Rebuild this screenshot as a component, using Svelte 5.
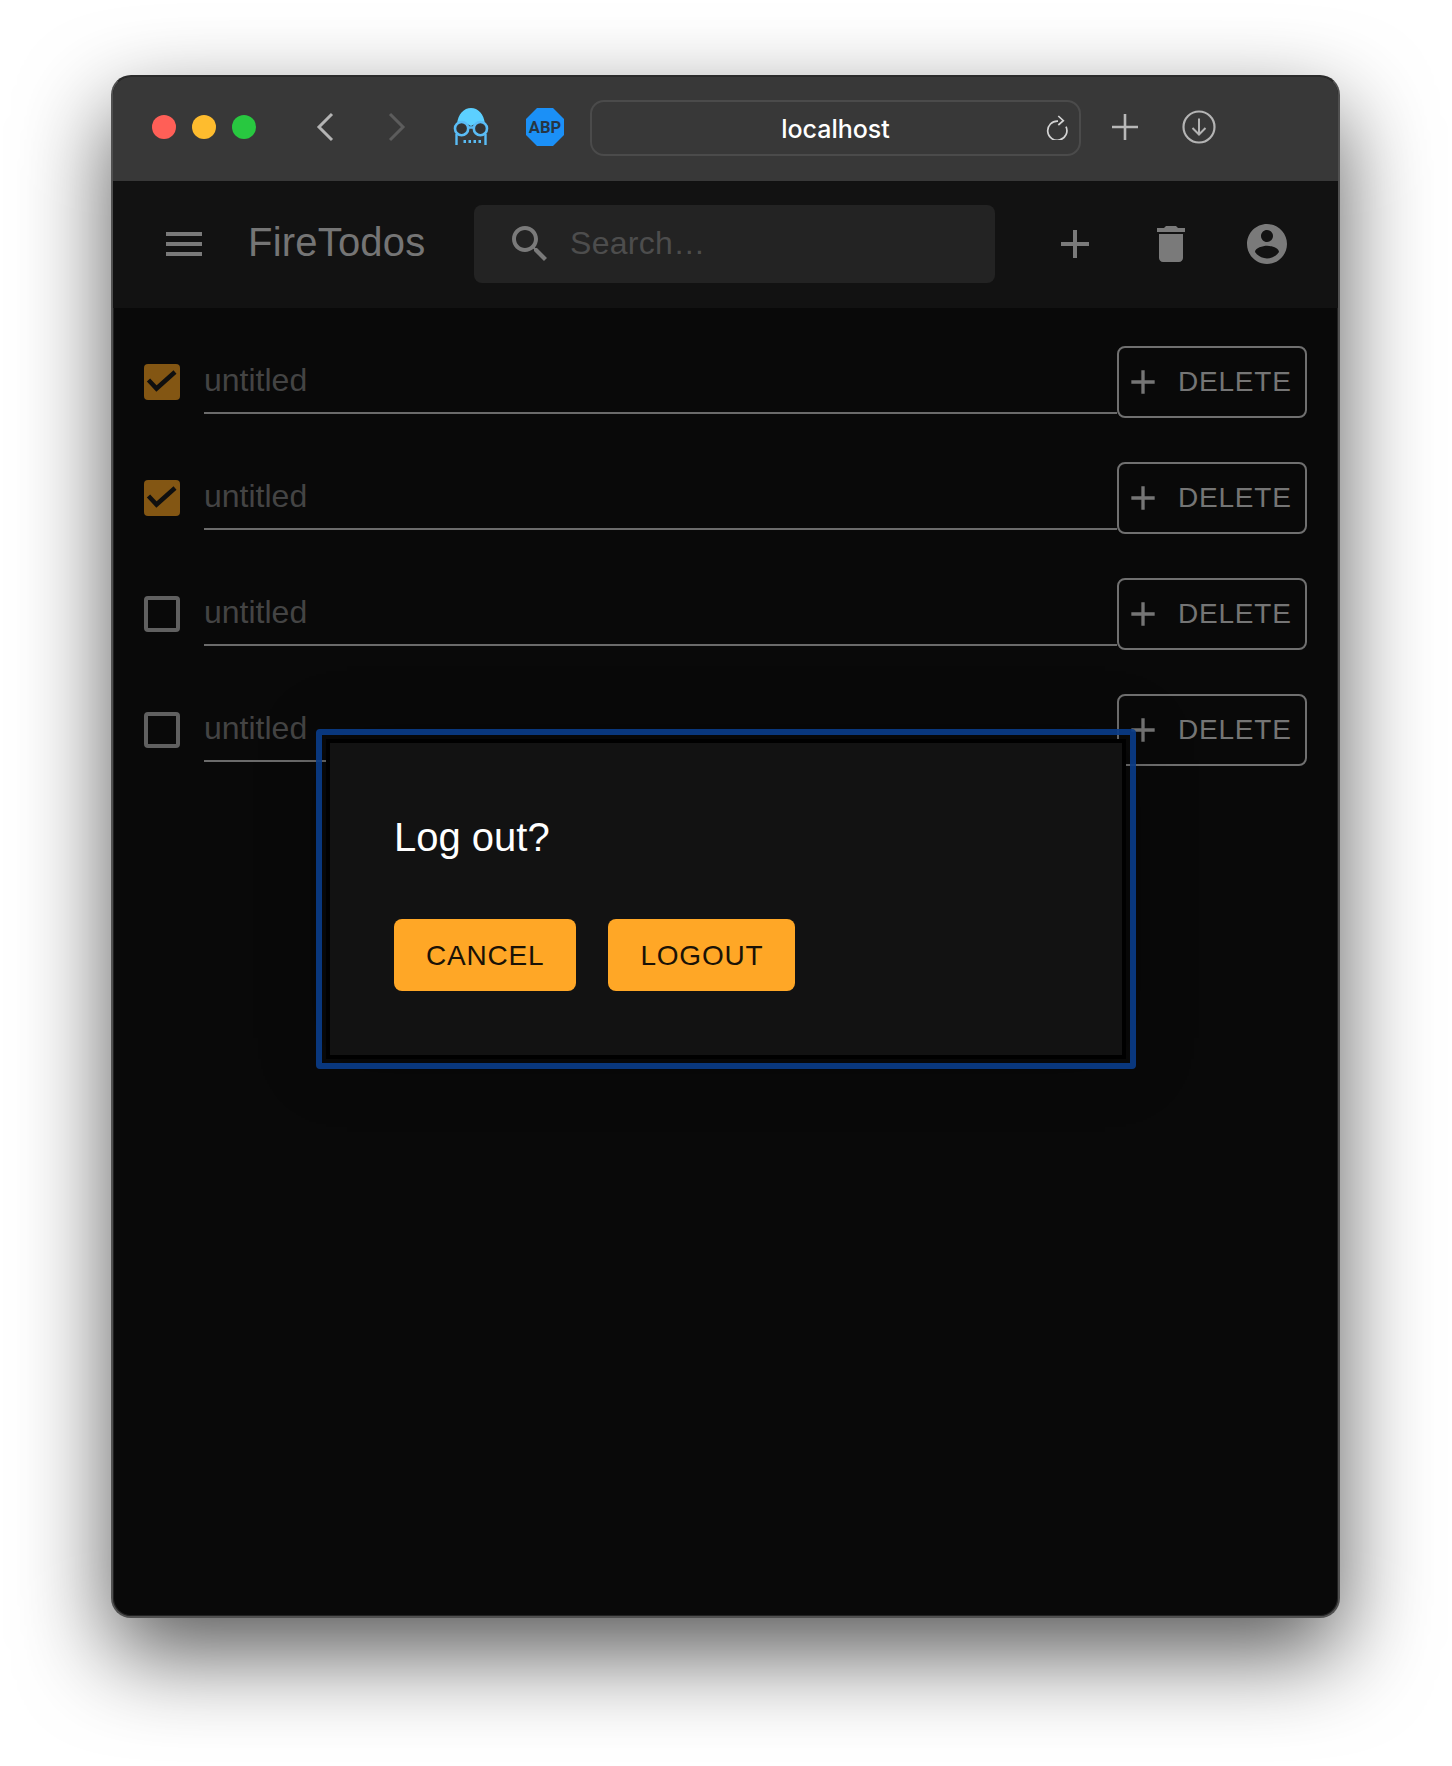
<script>
	const todos = [
		{ id: 1, done: true },
		{ id: 2, done: true },
		{ id: 3, done: false },
		{ id: 4, done: false }
	];
</script>

<div class="page">
	<div class="window">
		<div class="toolbar">
			<div class="lights">
				<span class="light red"></span>
				<span class="light yellow"></span>
				<span class="light green"></span>
			</div>
			<svg class="chevron" viewBox="0 0 20 32"><path d="M17 3 4 16l13 13" stroke="#b4b4b4" /></svg>
			<svg class="chevron next" viewBox="0 0 20 32"><path d="M3 3l13 13L3 29" stroke="#5c5c5c" /></svg>
			<svg class="ghost" viewBox="0 0 36 38">
				<path d="M4 16C5 6 11 0 18 0s13 6 14 16c-3-2-6-2-8-1l-6 3-6-3c-2-1-5-1-8 1z" fill="#5cd0ff" />
				<circle cx="8.6" cy="20.6" r="6.6" fill="#333" stroke="#5abcf5" stroke-width="2.6" />
				<circle cx="27.4" cy="20.6" r="6.6" fill="#333" stroke="#5abcf5" stroke-width="2.6" />
				<path d="M15 19.5h6M3.5 26v11M32.5 26v11" fill="none" stroke="#5abcf5" stroke-width="2.4" />
				<path d="M10.5 33.5h2.5M15.5 33.5h2.500M20.500 33.500h2.500M25.500 33.500h2.500" fill="none" stroke="#5abcf5" stroke-width="2.800" />
			</svg>
			<svg class="abp" viewBox="0 0 38 38">
				<path d="M11 0h16l11 11v16L27 38H11L0 27V11z" fill="#1b90f7" />
				<text x="19" y="25" text-anchor="middle">ABP</text>
			</svg>
			<div class="url">
				<span>localhost</span>
				<svg class="reload" viewBox="0 0 24 28">
					<path d="M13 9.100A9.600 9.600 0 1 0 21 14.600" fill="none" stroke="#d4d4d4" stroke-width="1.700" />
					<path d="M13.300 4l5 4.700-5 4.300" fill="none" stroke="#d4d4d4" stroke-width="1.700" />
				</svg>
			</div>
			<svg class="newtab" viewBox="0 0 28 28"><path d="M14 1v26M1 14h26" stroke="#b8b8b8" stroke-width="2.600" /></svg>
			<svg class="download" viewBox="0 0 34 34">
				<circle cx="17" cy="17" r="15.500" fill="none" stroke="#b4b4b4" stroke-width="2.200" />
				<path d="M17 8.500v16M10.500 18l6.500 6.500 6.500-6.500" fill="none" stroke="#b4b4b4" stroke-width="2" />
			</svg>
		</div>

		<header class="appbar">
			<svg class="icon" viewBox="0 0 24 24"><path d="M3 18h18v-2H3v2zm0-5h18v-2H3v2zm0-7v2h18V6H3z" /></svg>
			<div class="title">FireTodos</div>
			<div class="search">
				<svg class="icon" viewBox="0 0 24 24"><path d="M15.500 14h-.79l-.28-.27C15.410 12.590 16 11.110 16 9.500 16 5.910 13.090 3 9.500 3S3 5.910 3 9.500 5.910 16 9.500 16c1.610 0 3.090-.59 4.230-1.570l.27.28v.79l5 4.990L20.490 19l-4.990-5zm-6 0C7.010 14 5 11.990 5 9.500S7.010 5 9.500 5 14 7.010 14 9.500 11.990 14 9.500 14z" /></svg>
				<span>Search…</span>
			</div>
			<div class="actions">
				<svg class="icon" viewBox="0 0 24 24"><path d="M19 13h-6v6h-2v-6H5v-2h6V5h2v6h6v2z" /></svg>
				<svg class="icon" viewBox="0 0 24 24"><path d="M6 19c0 1.100.9 2 2 2h8c1.100 0 2-.9 2-2V7H6v12zM19 4h-3.500l-1-1h-5l-1 1H5v2h14V4z" /></svg>
				<svg class="icon" viewBox="0 0 24 24"><path d="M12 2C6.480 2 2 6.480 2 12s4.480 10 10 10 10-4.480 10-10S17.520 2 12 2zm0 3c1.660 0 3 1.340 3 3s-1.340 3-3 3-3-1.340-3-3 1.340-3 3-3zm0 14.200c-2.500 0-4.710-1.280-6-3.220.03-1.990 4-3.080 6-3.080 1.990 0 5.970 1.090 6 3.080-1.290 1.940-3.500 3.220-6 3.220z" /></svg>
			</div>
		</header>

		<main class="content">
			<ul class="todos">
				{#each todos as todo (todo.id)}
					<li>
						<span class="check" class:done={todo.done}>
							{#if todo.done}
								<svg viewBox="0 0 36 36"><path d="M4.500 16 12.500 24.500 31 8" /></svg>
							{/if}
						</span>
						<div class="text">untitled</div>
						<button type="button" class="del">
							<svg viewBox="0 0 24 24"><path d="M19 13h-6v6h-2v-6H5v-2h6V5h2v6h6v2z" /></svg>
							DELETE
						</button>
					</li>
				{/each}
			</ul>

			<div class="dialog">
				<h2>Log out?</h2>
				<div class="buttons">
					<button type="button">CANCEL</button>
					<button type="button">LOGOUT</button>
				</div>
			</div>
		</main>
	</div>
</div>

<style>
	:global(body) {
		background: #fff;
		font-family: "Liberation Sans", Arial, sans-serif;
	}
	.page {
		height: 1766px;
		box-sizing: border-box;
		padding: 75px 112px 148px 111px;
		overflow: hidden;
	}
	.window {
		height: 100%;
		display: flex;
		flex-direction: column;
		background: #090909;
		border-radius: 20px;
		overflow: hidden;
		box-shadow: 0 0 0 1px #222 inset, 0 36px 90px rgba(0, 0, 0, 0.65);
		border: 2px solid #505050;
		border-top-color: #2b2b2b;
		box-sizing: border-box;
	}
	.toolbar {
		height: 105px;
		flex: none;
		background: #383838;
		border-bottom: 1px solid #111;
		box-sizing: border-box;
		display: flex;
		align-items: center;
		padding: 0 0 4px 39px;
	}
	.lights {
		display: flex;
		gap: 16px;
	}
	.light {
		width: 24px;
		height: 24px;
		border-radius: 50%;
	}
	.red { background: #ff5f57; }
	.yellow { background: #febc2e; }
	.green { background: #28c840; }
	.chevron {
		width: 20px;
		height: 32px;
		margin-left: 59px;
	}
	.chevron.next {
		margin-left: 52px;
	}
	.chevron path {
		fill: none;
		stroke-width: 3;
	}
	.ghost {
		width: 36px;
		height: 38px;
		margin-left: 46px;
	}
	.abp {
		width: 38px;
		height: 38px;
		margin-left: 37px;
	}
	.abp text {
		font: 700 16.500px Roboto, sans-serif;
		fill: #263645;
	}
	.url {
		width: 491px;
		height: 56px;
		margin: 1px 0 0 26px;
		padding-top: 3px;
		box-sizing: border-box;
		border: 2px solid #4b4b4b;
		border-radius: 14px;
		position: relative;
		display: flex;
		align-items: center;
		justify-content: center;
		color: #fff;
		font: 500 25px Inter, sans-serif;
	}
	.reload {
		position: absolute;
		right: 10px;
		top: 10px;
		width: 24px;
		height: 28px;
	}
	.newtab {
		width: 28px;
		height: 28px;
		margin-left: 30px;
	}
	.download {
		width: 34px;
		height: 34px;
		margin-left: 43px;
	}
	.appbar {
		height: 126px;
		flex: none;
		background: #121212;
		display: flex;
		align-items: center;
		padding: 0 0 2px 47px;
		box-sizing: border-box;
		color: #757575;
	}
	.icon {
		width: 48px;
		height: 48px;
		flex: none;
		fill: #7a7a7a;
	}
	.title {
		font-size: 40px;
		margin-left: 40px;
		width: 226px;
		padding-bottom: 3px;
		letter-spacing: 0.2px;
		white-space: nowrap;
	}
	.search {
		width: 521px;
		height: 78px;
		background: #232323;
		border-radius: 8px;
		display: flex;
		align-items: center;
		padding-left: 32px;
		box-sizing: border-box;
		font-size: 32px;
		color: #4d4d4d;
	}
	.search span {
		margin: 0 0 2px 16px;
		letter-spacing: 0.3px;
	}
	.actions {
		display: flex;
		gap: 48px;
		margin-left: 56px;
	}
	.content {
		flex: 1;
		position: relative;
		padding: 38px 31px 0 31px;
	}
	.todos {
		list-style: none;
		margin: 0;
		padding: 0;
		display: flex;
		flex-direction: column;
		gap: 44px;
	}
	li {
		display: flex;
		align-items: center;
		height: 72px;
	}
	.check {
		width: 36px;
		height: 36px;
		flex: none;
		box-sizing: border-box;
		border: 4px solid #606060;
		border-radius: 4px;
		margin-right: 24px;
	}
	.check.done {
		border: 0;
		background: #835613;
	}
	.check svg {
		display: block;
		width: 36px;
		height: 36px;
	}
	.check path {
		fill: none;
		stroke: #0f0f0f;
		stroke-width: 4.500;
	}
	.text {
		flex: 1;
		align-self: flex-start;
		box-sizing: border-box;
		height: 68px;
		line-height: 68px;
		border-bottom: 2px solid #6b6b6b;
		font-size: 32px;
		color: #444;
	}
	.del {
		width: 190px;
		height: 72px;
		flex: none;
		background: transparent;
		border: 2px solid #707070;
		border-radius: 8px;
		color: #757575;
		font: 400 28px "Liberation Sans", Arial, sans-serif;
		letter-spacing: 0.8px;
		display: flex;
		align-items: center;
		padding: 0 0 0 4px;
		box-sizing: border-box;
	}
	.del svg {
		width: 40px;
		height: 40px;
		margin-right: 15px;
		fill: #757575;
	}
	.dialog {
		position: absolute;
		left: 213px;
		top: 431px;
		width: 792px;
		height: 312px;
		box-sizing: content-box;
		background: #121212;
		border: 4px solid #000;
		box-shadow: 0 0 60px rgba(0, 0, 0, 0.35);
	}
	.dialog::after {
		content: "";
		position: absolute;
		inset: -14px;
		border: 6px solid rgba(10, 60, 136, 0.92);
		border-radius: 4px;
		pointer-events: none;
	}
	h2 {
		margin: 0;
		padding: 70px 0 0 64px;
		font-size: 40px;
		font-weight: 400;
		line-height: 48px;
		color: #fff;
	}
	.buttons {
		display: flex;
		gap: 32px;
		margin: 58px 0 0 64px;
	}
	.buttons button {
		height: 72px;
		padding: 2px 32px 0;
		border: 0;
		border-radius: 8px;
		background: #ffa726;
		color: #1a1206;
		font: 400 28px "Liberation Sans", Arial, sans-serif;
		letter-spacing: 0.8px;
	}
</style>
